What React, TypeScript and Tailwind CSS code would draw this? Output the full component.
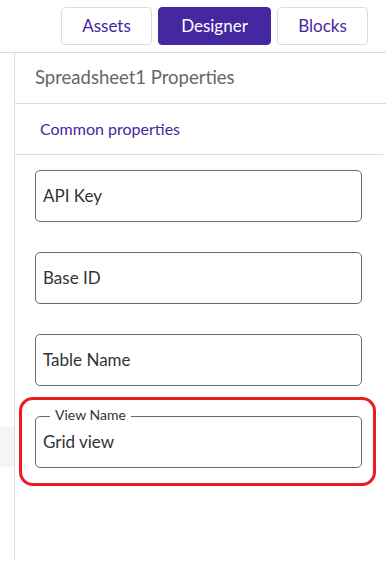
import React from "react";

function Field({ label, value }: { label: string; value?: string }) {
  return (
    <div className="relative h-[52px] rounded-[5px] border border-[#6b6b6b] px-[7px] flex items-center text-[17px] text-[#333]">
      {value !== undefined && (
        <span className="absolute left-[14px] -top-[10px] bg-white px-[5px] text-[14px] leading-[16px] text-[#333]">{label}</span>
      )}
      {value !== undefined ? value : label}
    </div>
  );
}

export default function App() {
  return (
    <div className="w-[386px] h-[561px] bg-white overflow-hidden flex flex-col" style={{ fontFamily: "Lato, 'Open Sans', sans-serif" }}>
      {/* top bar */}
      <div className="h-[53px] flex-none border-b border-[#dcdcdc] flex items-start justify-end gap-[6px] pt-[7px] pr-[18px]">
        <button className="h-[38px] w-[91px] rounded-[4px] border border-[#dcdcdc] bg-white text-[#4527a0] text-[17px]">Assets</button>
        <button className="h-[38px] w-[113px] rounded-[4px] border border-[#4527a0] bg-[#4527a0] text-white text-[17px]">Designer</button>
        <button className="h-[38px] w-[91px] rounded-[4px] border border-[#dcdcdc] bg-white text-[#4527a0] text-[17px]">Blocks</button>
      </div>

      <div className="flex-1 flex min-h-0">
        {/* left gutter */}
        <div className="w-[15px] flex-none border-r border-[#dcdcdc] flex flex-col">
          <div className="h-[374px]" />
          <div className="h-[40px] bg-[#f5f5f5]" />
        </div>

        {/* properties panel */}
        <div className="flex-1 flex flex-col min-w-0">
          <div className="h-[51px] flex-none border-b border-[#dcdcdc] flex items-center pl-[20px] text-[18.5px] text-[#666]">
            Spreadsheet1 Properties
          </div>
          <div className="h-[51px] flex-none border-b border-[#dcdcdc] flex items-center pl-[25px] text-[16px] text-[#4527a0] mr-[3px]">
            Common properties
          </div>
          <div className="flex flex-col gap-[30px] pt-[15px] pl-[20px] pr-[24px]">
            <Field label="API Key" />
            <Field label="Base ID" />
            <Field label="Table Name" />
            <div className="relative">
              <Field label="View Name" value="Grid view" />
              <div className="absolute -left-[16px] -right-[14px] -top-[19px] -bottom-[18px] rounded-[14px] border-[3px] border-[#ed1c24] pointer-events-none" />
            </div>
          </div>
        </div>
      </div>
    </div>
  );
}
